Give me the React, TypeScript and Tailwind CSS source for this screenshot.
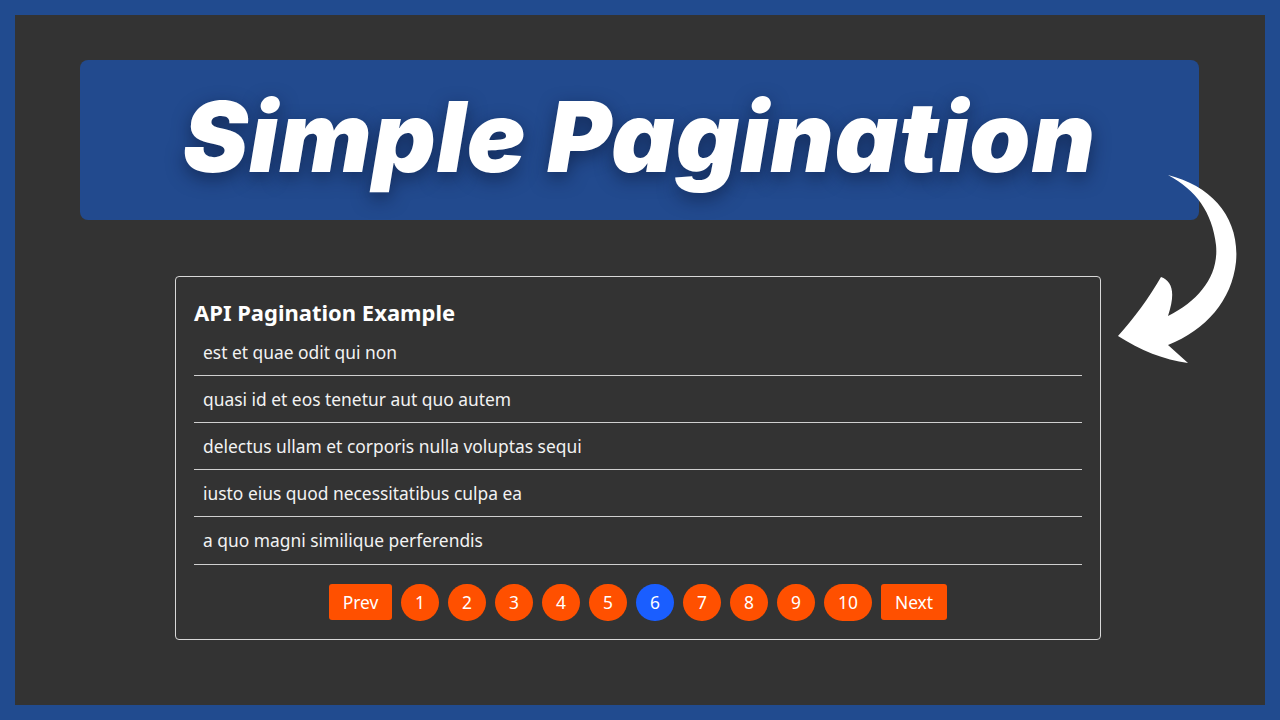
import { useState } from "react";

const posts = [
  "est et quae odit qui non",
  "quasi id et eos tenetur aut quo autem",
  "delectus ullam et corporis nulla voluptas sequi",
  "iusto eius quod necessitatibus culpa ea",
  "a quo magni similique perferendis",
];

function CurvedArrow() {
  return (
    <svg
      className="pointer-events-none absolute left-0 top-0"
      width="1280"
      height="720"
      viewBox="0 0 1280 720"
    >
      <path
        fill="#ffffff"
        d="M1168,175 C1212,186 1240,218 1236,262 C1232,300 1206,330 1168,345 L1188,363 C1164,360 1140,350 1118,336 C1134,318 1149,298 1161,277 C1172,281 1176,292 1168,316 C1200,300 1219,275 1216,245 C1212,212 1196,190 1168,175 Z"
      />
    </svg>
  );
}

export default function App() {
  const [page, setPage] = useState(6);

  return (
    <div className="relative h-[720px] w-[1280px] bg-[#214b8f] p-[15px]">
      <div className="h-full w-full bg-[#333333] pt-[45px]">
        <div className="ml-[65px] flex h-[160px] w-[1119px] items-center justify-center rounded-lg bg-[#224a8e]">
          <h1 className="pb-2 font-['Inter',sans-serif] text-[98px] font-black italic tracking-[1px] text-white [text-shadow:0_6px_18px_rgba(10,20,50,0.55)]">
            Simple Pagination
          </h1>
        </div>

        <div className="ml-[160px] mt-[56px] w-[926px] rounded border border-[#d8d8d8] px-[18px] pb-[18px] pt-[20px] font-['Noto_Sans',sans-serif] text-white">
          <h2 className="mb-[2px] text-[22px] font-bold leading-[30px]">API Pagination Example</h2>

          <ul>
            {posts.map((title, i) => (
              <li
                key={title}
                className={`border-b border-[#d0d0d0] pl-[9px] text-[17.4px] leading-[22px] text-[#f2f2f2] ${
                  i === posts.length - 1 ? "pb-[13px] pt-[12px]" : "py-[12px]"
                }`}
              >
                {title}
              </li>
            ))}
          </ul>

          <div className="mt-[19px] flex justify-center gap-[9px] text-[17.4px] text-white">
            <button
              className="h-[36px] w-[63px] rounded-[3px] bg-[#ff5000]"
              onClick={() => setPage(Math.max(1, page - 1))}
            >
              Prev
            </button>
            {Array.from({ length: 10 }, (_, i) => i + 1).map((n) => (
              <button
                key={n}
                onClick={() => setPage(n)}
                className={`h-[37px] rounded-full ${n === 10 ? "w-[48px]" : "w-[38px]"} ${
                  n === page ? "bg-[#1a5eff]" : "bg-[#ff5000]"
                }`}
              >
                {n}
              </button>
            ))}
            <button
              className="h-[36px] w-[66px] rounded-[3px] bg-[#ff5000]"
              onClick={() => setPage(Math.min(10, page + 1))}
            >
              Next
            </button>
          </div>
        </div>
      </div>
      <CurvedArrow />
    </div>
  );
}
